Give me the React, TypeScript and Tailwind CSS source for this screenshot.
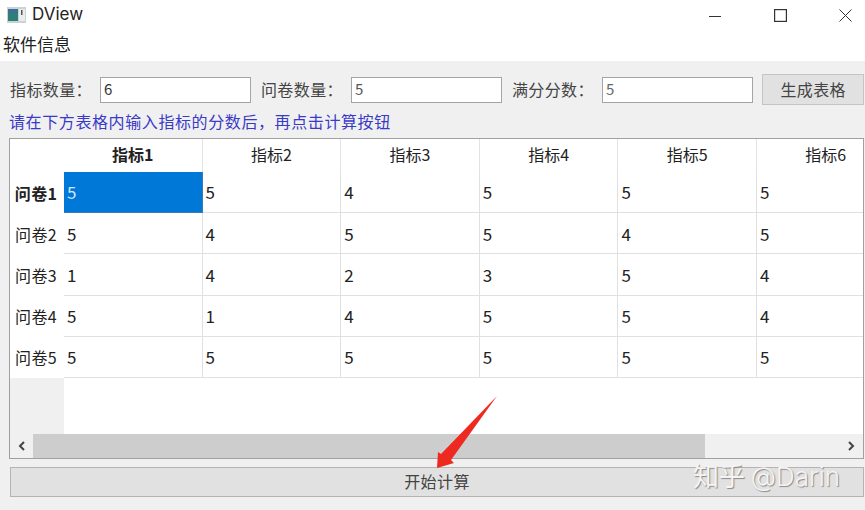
const cjk = "font-['Noto_Sans_CJK_SC',sans-serif]";

const headers = ['指标1', '指标2', '指标3', '指标4', '指标5', '指标6'];
const rows = [
  ['问卷1', '5', '5', '4', '5', '5', '5'],
  ['问卷2', '5', '4', '5', '5', '4', '5'],
  ['问卷3', '1', '4', '2', '3', '5', '4'],
  ['问卷4', '5', '1', '4', '5', '5', '4'],
  ['问卷5', '5', '5', '5', '5', '5', '5'],
];

function Field({ label, value, valueColor }: { label: string; value: string; valueColor: string }) {
  return (
    <div className="flex items-center">
      <span className="w-[90px] pb-[2px] text-[16px] tracking-[0.4px] text-[#444]">{label}</span>
      <div className={`flex h-[26px] w-[151.4px] items-center border border-[#a5a5a5] bg-white px-[3px] text-[15px] ${valueColor}`}>
        {value}
      </div>
    </div>
  );
}

function DataTable() {
  return (
    <div className="ml-[9px] mr-px mt-[4px] h-[321px] overflow-hidden border border-[#a0a0a0] bg-white">
      <div className="flex h-[295px]">
        {/* row headers */}
        <div className="flex w-[54px] shrink-0 flex-col bg-[#f0f0f0]">
          <div className="h-[33px] shrink-0 bg-white" />
          {rows.map((row, i) => (
            <div
              key={row[0]}
              className={`flex h-[41.2px] shrink-0 items-center justify-center bg-white pr-[2px] text-[16px] tracking-[0.3px] text-[#222] ${i === 0 ? 'font-bold' : ''}`}
            >
              {row[0]}
            </div>
          ))}
        </div>

        {/* cells */}
        <div className="flex-1 overflow-hidden">
          <div className="flex h-[33px] w-[840px]">
            {headers.map((h, i) => (
              <div
                key={h}
                className={`flex w-[138.6px] shrink-0 items-center justify-center border-r border-[#e3e3e3] pb-[3px] text-[16px] text-[#222] ${i === 0 ? 'font-bold' : ''}`}
              >
                {h}
              </div>
            ))}
          </div>
          {rows.map((row, r) => (
            <div key={row[0]} className="flex h-[41.2px] w-[840px]">
              {row.slice(1).map((v, c) => (
                <div
                  key={c}
                  className={`flex w-[138.6px] shrink-0 items-center border-b border-r pl-[3px] text-[17px] ${
                    r === 0 && c === 0
                      ? 'border-[#3d78b0] bg-[#0078d7] text-[#cfe6fa]'
                      : 'border-[#e0e0e0] text-[#222]'
                  }`}
                >
                  {v}
                </div>
              ))}
            </div>
          ))}
        </div>
      </div>

      {/* horizontal scrollbar */}
      <div className="flex h-[24px] items-stretch bg-[#f0f0f0]">
        <div className="flex w-[23px] shrink-0 items-center justify-center">
          <svg width="8" height="10" viewBox="0 0 8 10" fill="none" stroke="#444" strokeWidth="2">
            <path d="M6 1 L2 5 L6 9" />
          </svg>
        </div>
        <div className="w-[672px] shrink-0 bg-[#cdcdcd]" />
        <div className="flex-1" />
        <div className="flex w-[24px] shrink-0 items-center justify-center">
          <svg width="8" height="10" viewBox="0 0 8 10" fill="none" stroke="#444" strokeWidth="2">
            <path d="M2 1 L6 5 L2 9" />
          </svg>
        </div>
      </div>
    </div>
  );
}

export default function App() {
  return (
    <div className={`relative h-[510px] w-[865px] overflow-hidden bg-white ${cjk}`}>
      {/* title bar */}
      <div className="flex h-[30px] items-center">
        <svg className="ml-[7px] mr-[6px]" width="19" height="16" viewBox="0 0 19 16">
          <rect width="19" height="16" fill="#c9d3d0" />
          <rect x="1" y="2" width="10" height="12" fill="#2f7f78" />
          <rect x="1" y="2" width="10" height="4" fill="#3b6f9a" />
          <rect x="12" y="2" width="6" height="12" fill="#e8ecea" />
          <rect x="14" y="3" width="1.5" height="5" fill="#555" />
        </svg>
        <span className="font-['Inter',sans-serif] text-[17px] text-[#222]">DView</span>
        <div className="ml-auto flex items-center">
          <svg className="mr-[53px]" width="12" height="12" viewBox="0 0 12 12" stroke="#333" strokeWidth="1">
            <path d="M0 7.5 H12" />
          </svg>
          <svg className="mr-[52px]" width="13" height="13" viewBox="0 0 13 13" fill="none" stroke="#333" strokeWidth="1.2">
            <rect x="0.6" y="0.6" width="11.8" height="11.8" />
          </svg>
          <svg className="mr-[13px]" width="13" height="13" viewBox="0 0 13 13" stroke="#333" strokeWidth="1">
            <path d="M0.5 0.5 L12.5 12.5 M12.5 0.5 L0.5 12.5" />
          </svg>
        </div>
      </div>

      {/* menu bar */}
      <div className="flex h-[31px] items-center px-[3px] pb-[6px] pt-[3px] text-[17px] text-[#222]">软件信息</div>

      {/* main panel */}
      <div className="h-[449px] bg-[#f0f0f0]">
        <div className="flex h-[44px] items-center pl-[10px] pr-px pt-[13px]">
          <Field label="指标数量：" value="6" valueColor="text-[#333]" />
          <div className="w-[9.6px]" />
          <Field label="问卷数量：" value="5" valueColor="text-[#555]" />
          <div className="w-[9.6px]" />
          <Field label="满分分数：" value="5" valueColor="text-[#666]" />
          <button className="ml-[9px] flex h-[31px] w-[102px] items-center justify-center border border-[#c4c4c4] bg-[#e1e1e1] pb-[2px] text-[16px] tracking-[0.3px] text-[#444]">
            生成表格
          </button>
        </div>
        <div className="flex h-[29px] items-center pb-[2px] pl-[9px] pt-[4px] text-[16px] tracking-[0.6px] text-[#3a3ac8]">
          请在下方表格内输入指标的分数后，再点击计算按钮
        </div>

        <DataTable />

        <button className="mx-[10px] mt-[8px] flex h-[30px] w-[854px] items-center justify-center border border-[#b4b4b4] bg-[#e1e1e1] pb-[2px] text-[16px] tracking-[0.4px] text-[#444]">
          开始计算
        </button>
      </div>

      {/* red annotation arrow */}
      <svg className="absolute left-[430px] top-[392px]" width="72" height="80" viewBox="0 0 72 80">
        <path d="M67 4 L21 68 L24 71 L7 76 L8 60 L11 62 Z" fill="#ee2a20" />
      </svg>

      {/* watermark */}
      <div className="absolute left-[693px] top-[458px] text-[26px] leading-[34px] text-[#f4f4f4] [text-shadow:1px_1px_1px_#8a8a8a]">
        知乎 <span className="font-['Inter',sans-serif] font-light">@Darin</span>
      </div>
    </div>
  );
}
